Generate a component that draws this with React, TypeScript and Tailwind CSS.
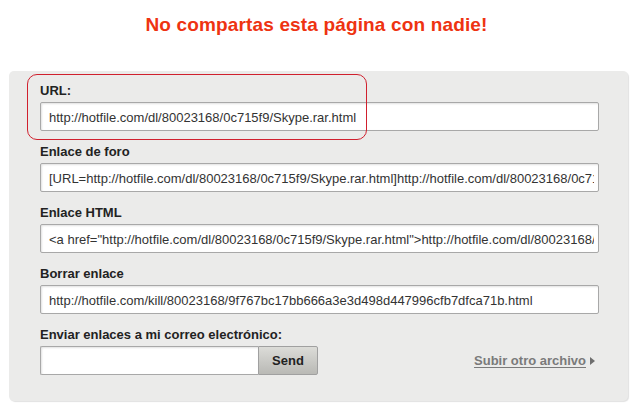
import React from "react";

const font = { fontFamily: '"Liberation Sans", Arial, sans-serif' };

function Field({ label, value }: { label: string; value: string }) {
  return (
    <div className="flex flex-col">
      <div className="h-[16px] text-[13px] leading-[16px] font-bold text-[#222]">{label}</div>
      <input
        readOnly
        value={value}
        className="mt-[3px] h-[29px] w-[559px] rounded-[2px] border border-[#a8a8a8] bg-white pl-[8px] pr-[4px] pt-[1px] text-[13px] text-[#333] shadow-[inset_1px_1px_2px_rgba(0,0,0,0.12)] outline-none"
        style={font}
      />
    </div>
  );
}

export default function App() {
  return (
    <div className="relative h-[405px] w-[633px] overflow-hidden bg-white" style={font}>
      <div className="pt-[14px] text-center text-[19px] leading-[22px] font-bold tracking-[0.15px] text-[#ee3311]">
        No compartas esta página con nadie!
      </div>
      <div className="ml-[9px] mt-[35px] h-[330px] w-[619px] rounded-[5px] bg-[#ebebea] pl-[31px] pt-[12px] shadow-[1px_1px_1px_rgba(0,0,0,0.12)]">
        <div className="flex flex-col gap-[13px]">
          <Field label="URL:" value="http://hotfile.com/dl/80023168/0c715f9/Skype.rar.html" />
          <Field
            label="Enlace de foro"
            value="[URL=http://hotfile.com/dl/80023168/0c715f9/Skype.rar.html]http://hotfile.com/dl/80023168/0c715f9/Skype.rar.html[/URL]"
          />
          <Field
            label="Enlace HTML"
            value={'<a href="http://hotfile.com/dl/80023168/0c715f9/Skype.rar.html">http://hotfile.com/dl/80023168/0c715f9/Skype.rar.html</a>'}
          />
          <Field
            label="Borrar enlace"
            value="http://hotfile.com/kill/80023168/9f767bc17bb666a3e3d498d447996cfb7dfca71b.html"
          />
          <div className="flex flex-col">
            <div className="h-[16px] text-[13px] leading-[16px] font-bold text-[#222]">
              Enviar enlaces a mi correo electrónico:
            </div>
            <div className="mt-[3px] flex w-[559px] items-center">
              <input
                className="h-[29px] w-[218px] rounded-l-[2px] border border-r-0 border-[#a8a8a8] bg-white pl-[8px] text-[13px] text-[#333] shadow-[inset_1px_1px_2px_rgba(0,0,0,0.12)] outline-none"
                style={font}
              />
              <button
                className="h-[29px] w-[60px] rounded-r-[2px] border border-[#a0a0a0] bg-gradient-to-b from-[#dcdcd8] to-[#b9b9b5] text-[13px] font-bold text-[#222]"
                style={font}
              >
                Send
              </button>
              <div className="ml-auto flex items-center gap-[4px] pr-[4px]">
                <span className="text-[13px] font-bold text-[#7a7a7a] underline underline-offset-2">Subir otro archivo</span>
                <svg width="5" height="8" viewBox="0 0 5 8">
                  <path d="M0 0 L5 4 L0 8 Z" fill="#6e6e6e" />
                </svg>
              </div>
            </div>
          </div>
        </div>
      </div>
      <div className="absolute left-[27px] top-[74px] h-[66px] w-[340px] rounded-[10px] border border-[#d0202e]" />
    </div>
  );
}
